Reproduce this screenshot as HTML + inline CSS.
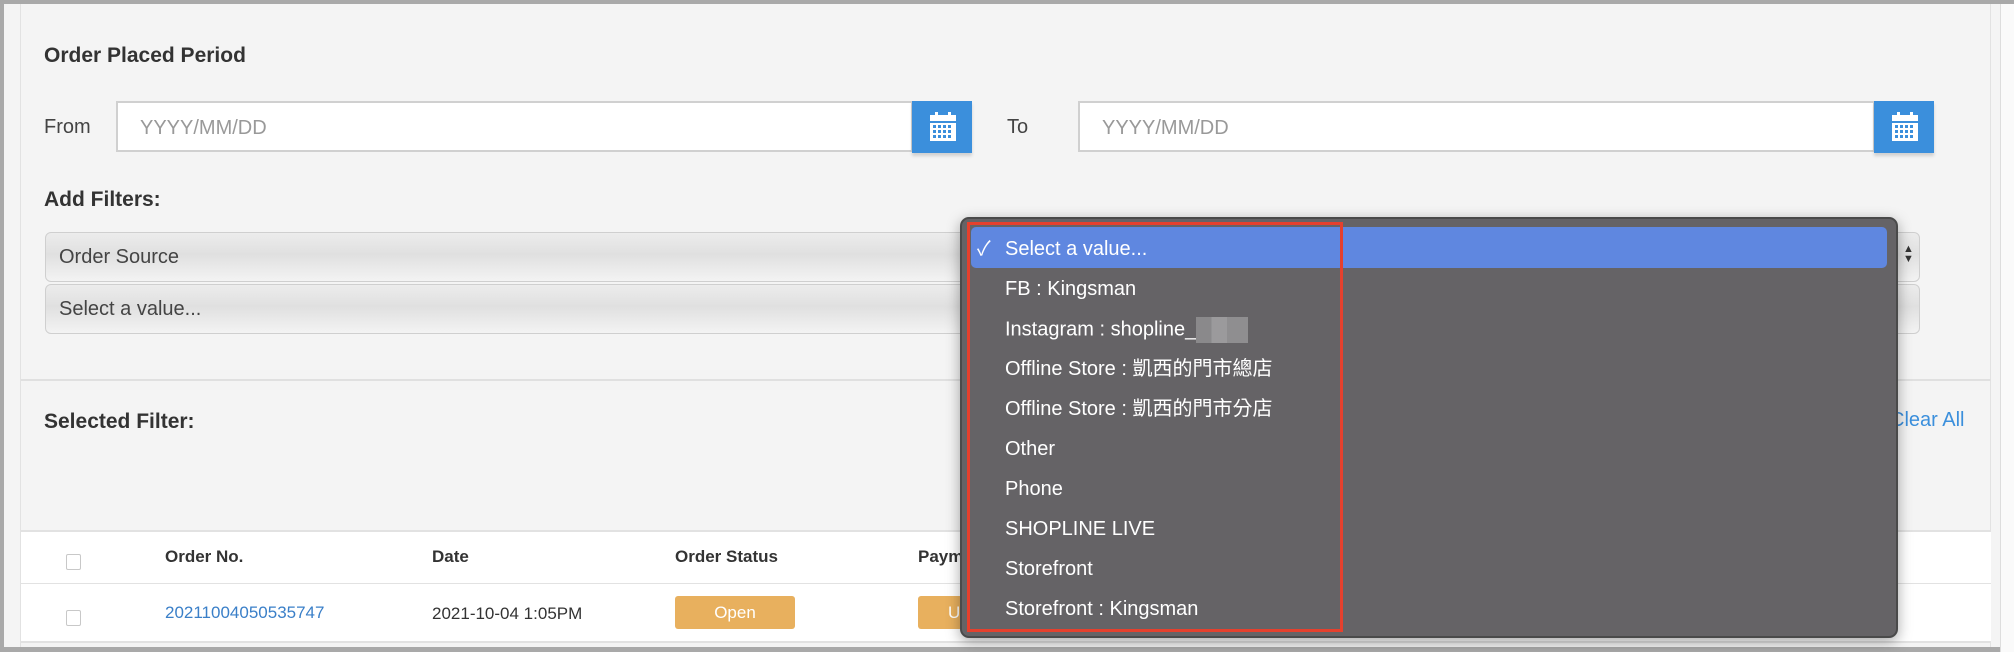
<!DOCTYPE html>
<html><head><meta charset="utf-8"><style>
*{box-sizing:border-box;margin:0;padding:0}
body{width:2014px;height:652px;background:#a9a9a9;position:relative;overflow:hidden;font-family:"Liberation Sans","Noto Sans CJK TC",sans-serif;color:#333}
.abs{position:absolute}
#page{left:4px;top:4px;width:2006px;height:643px;background:#f4f4f4}
#panel{left:20px;top:4px;width:1971px;height:643px;background:#f4f4f4;border-left:1px solid #e2e2e2;border-right:1px solid #e2e2e2}
.h{font-weight:bold;font-size:21px;color:#333}
.lbl{font-size:20px;color:#444}
.inp{background:#fff;border:2px solid #d0d0d0;height:51px;font-size:20px;color:#999;padding:14px 0 0 22px}
.cal{background:#3b8fdc;height:52px;width:60px;box-shadow:0 3px 3px rgba(0,0,0,.15)}
.sel{border:1px solid #cfcfcf;border-radius:6px;background:linear-gradient(#ececec,#e0e0e0 45%,#f3f3f3);font-size:20px;color:#444;padding:13px 0 0 13px}
.th{font-size:17px;font-weight:bold;color:#333}
.cb{width:15px;height:16px;border:1px solid #c8c8c8;background:#fff;border-radius:2px}
#dd{left:960px;top:217px;width:938px;height:421px;background:#656366;border:2px solid #4a4a4a;border-radius:9px;box-shadow:0 4px 14px rgba(0,0,0,.35)}
.it{position:absolute;left:1005px;font-size:20px;color:#fff;line-height:24px;white-space:nowrap}
.blur{display:inline-block;vertical-align:middle;width:52px;height:26px;background:linear-gradient(90deg,#8a898b 0 30%,#9b9a9c 30% 60%,#8f8e90 60%)}
</style></head><body>
<div id="page" class="abs"></div>
<div id="panel" class="abs"></div>
<div class="abs" style="left:2000px;top:0;width:14px;height:652px;background:#fafafa;border-left:1px solid #ddd"></div>
<div class="abs" style="left:0;top:0;width:2014px;height:4px;background:#a9a9a9"></div>

<div class="abs h" style="left:44px;top:44px">Order Placed Period</div>
<div class="abs lbl" style="left:44px;top:116px">From</div>
<div class="abs inp" style="left:116px;top:101px;width:797px">YYYY/MM/DD</div>
<div class="abs cal" style="left:912px;top:101px">
<svg width="60" height="52" viewBox="0 0 60 52"><rect x="18" y="14" width="26" height="26" fill="#fff"/><rect x="18" y="20" width="26" height="2" fill="#3b8fdc"/><rect x="23" y="11" width="3" height="6" fill="#fff"/><rect x="36" y="11" width="3" height="6" fill="#fff"/><g fill="#3b8fdc"><rect x="21" y="24" width="3" height="3"/><rect x="26" y="24" width="3" height="3"/><rect x="31" y="24" width="3" height="3"/><rect x="36" y="24" width="3" height="3"/><rect x="21" y="29" width="3" height="3"/><rect x="26" y="29" width="3" height="3"/><rect x="31" y="29" width="3" height="3"/><rect x="36" y="29" width="3" height="3"/><rect x="21" y="34" width="3" height="3"/><rect x="26" y="34" width="3" height="3"/><rect x="31" y="34" width="3" height="3"/><rect x="36" y="34" width="3" height="3"/></g></svg></div>
<div class="abs lbl" style="left:1007px;top:116px">To</div>
<div class="abs inp" style="left:1078px;top:101px;width:797px">YYYY/MM/DD</div>
<div class="abs cal" style="left:1874px;top:101px">
<svg width="60" height="52" viewBox="0 0 60 52"><rect x="18" y="14" width="26" height="26" fill="#fff"/><rect x="18" y="20" width="26" height="2" fill="#3b8fdc"/><rect x="23" y="11" width="3" height="6" fill="#fff"/><rect x="36" y="11" width="3" height="6" fill="#fff"/><g fill="#3b8fdc"><rect x="21" y="24" width="3" height="3"/><rect x="26" y="24" width="3" height="3"/><rect x="31" y="24" width="3" height="3"/><rect x="36" y="24" width="3" height="3"/><rect x="21" y="29" width="3" height="3"/><rect x="26" y="29" width="3" height="3"/><rect x="31" y="29" width="3" height="3"/><rect x="36" y="29" width="3" height="3"/><rect x="21" y="34" width="3" height="3"/><rect x="26" y="34" width="3" height="3"/><rect x="31" y="34" width="3" height="3"/><rect x="36" y="34" width="3" height="3"/></g></svg></div>

<div class="abs h" style="left:44px;top:188px">Add Filters:</div>
<div class="abs sel" style="left:45px;top:232px;width:1875px;height:50px">Order Source</div>
<div class="abs sel" style="left:45px;top:284px;width:1875px;height:50px">Select a value...</div>
<div class="abs" style="left:1903px;top:244px;font-size:11px;line-height:10px;color:#333">▲<br>▼</div>

<div class="abs" style="left:21px;top:379px;width:1970px;height:2px;background:#e0e0e0"></div>
<div class="abs h" style="left:44px;top:410px">Selected Filter:</div>
<div class="abs" style="left:1890px;top:409px;font-size:20px;color:#3b8fdc">Clear All</div>

<div class="abs" style="left:21px;top:530px;width:1970px;height:113px;background:#fff;border-top:2px solid #e2e2e2"></div>
<div class="abs" style="left:21px;top:583px;width:1970px;height:1px;background:#e2e2e2"></div>
<div class="abs" style="left:21px;top:641px;width:1970px;height:2px;background:#e2e2e2"></div>
<div class="abs cb" style="left:66px;top:554px"></div>
<div class="abs th" style="left:165px;top:547px">Order No.</div>
<div class="abs th" style="left:432px;top:547px">Date</div>
<div class="abs th" style="left:675px;top:547px">Order Status</div>
<div class="abs th" style="left:918px;top:547px">Payment</div>
<div class="abs cb" style="left:66px;top:610px"></div>
<div class="abs" style="left:165px;top:603px;font-size:17px;color:#3a7fc8">20211004050535747</div>
<div class="abs" style="left:432px;top:604px;font-size:17px;color:#333">2021-10-04 1:05PM</div>
<div class="abs" style="left:675px;top:596px;width:120px;height:33px;background:#e8b05e;border-radius:3px;color:#fff;font-size:17px;text-align:center;padding-top:7px">Open</div>
<div class="abs" style="left:918px;top:596px;width:120px;height:33px;background:#e8b05e;border-radius:3px;color:#fff;font-size:17px;padding:7px 0 0 30px">Unpaid</div>

<div id="dd" class="abs"></div>
<div class="abs" style="left:971px;top:227px;width:916px;height:41px;background:#5f87e0;border-radius:5px"></div>
<div class="it" style="left:977px;top:237px">✓</div>
<div class="it" style="top:237px">Select a value...</div>
<div class="it" style="top:277px">FB : Kingsman</div>
<div class="it" style="top:317px">Instagram : shopline_<span class="blur"></span></div>
<div class="it" style="top:357px">Offline Store : 凱西的門市總店</div>
<div class="it" style="top:397px">Offline Store : 凱西的門市分店</div>
<div class="it" style="top:437px">Other</div>
<div class="it" style="top:477px">Phone</div>
<div class="it" style="top:517px">SHOPLINE LIVE</div>
<div class="it" style="top:557px">Storefront</div>
<div class="it" style="top:597px">Storefront : Kingsman</div>
<div class="abs" style="left:967px;top:222px;width:376px;height:410px;border:3px solid #e5402d"></div>
</body></html>
